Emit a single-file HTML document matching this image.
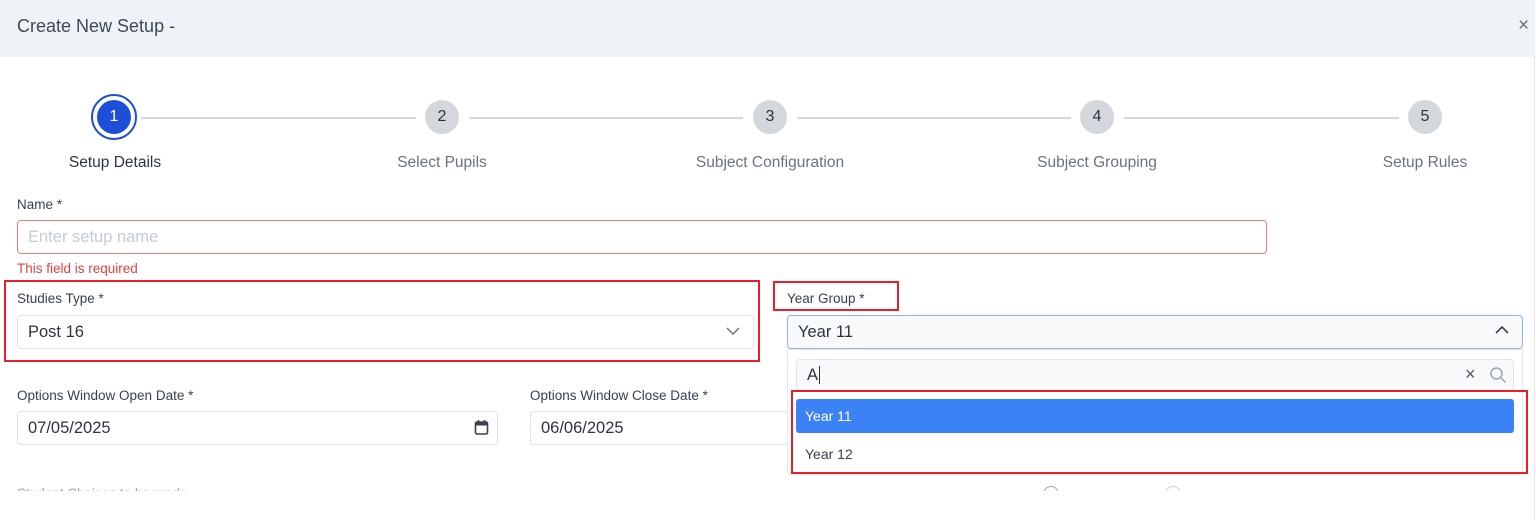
<!DOCTYPE html>
<html><head><meta charset="utf-8"><style>
*{box-sizing:border-box;margin:0;padding:0}
body{width:1536px;height:520px;background:#fff;font-family:"Liberation Sans",sans-serif;position:relative;overflow:hidden;color:#374151}
.a{position:absolute}
.hdr{left:0;top:0;width:1535px;height:57px;background:#eff3f8}
.t{font-size:18px;color:#3f4856;left:17px;top:16px}
.circ{width:34px;height:34px;border-radius:50%;background:#d4d7dc;color:#2d3440;font-size:16px;text-align:center;line-height:34px;top:100px}
.line{height:2px;background:#d4d7dc;top:117px}
.lbl{font-size:15.5px;color:#6b7280;top:154px;white-space:nowrap;transform:translateX(-50%)}
.fl{font-size:13.5px;color:#374151}
.inp{border:1px solid #dfe3ea;border-radius:4px;background:#fff;height:34px;font-size:16.5px;color:#2d3440;padding-left:10px;line-height:32px}
.red{border:2px solid #e5202b}
</style></head><body>
<div class="a hdr"></div>
<div class="a t">Create New Setup -</div>
<div class="a" style="left:1518px;top:15px;font-size:19px;color:#6b7280">×</div>
<div class="a" style="left:1534px;top:57px;width:1px;height:463px;background:#e5e7eb"></div>

<div class="a line" style="left:141px;width:275px"></div>
<div class="a line" style="left:469px;width:274px"></div>
<div class="a line" style="left:797px;width:274px"></div>
<div class="a line" style="left:1124px;width:275px"></div>
<div class="a circ" style="left:91px;top:94px;width:46px;height:46px;background:#fff;border:2px solid #1d4ed8"></div>
<div class="a circ" style="left:97px;background:#1d4ed8;color:#fff">1</div>
<div class="a circ" style="left:425px">2</div>
<div class="a circ" style="left:753px">3</div>
<div class="a circ" style="left:1080px">4</div>
<div class="a circ" style="left:1408px">5</div>
<div class="a lbl" style="left:115px;color:#2d3440">Setup Details</div>
<div class="a lbl" style="left:442px">Select Pupils</div>
<div class="a lbl" style="left:770px">Subject Configuration</div>
<div class="a lbl" style="left:1097px">Subject Grouping</div>
<div class="a lbl" style="left:1425px">Setup Rules</div>

<div class="a fl" style="left:17px;top:197px">Name *</div>
<div class="a inp" style="left:17px;top:220px;width:1250px;border-color:#f07c7c;color:#c5cbd5">Enter setup name</div>
<div class="a" style="left:17px;top:261px;font-size:13.5px;color:#e53e3e">This field is required</div>

<div class="a red" style="left:4px;top:280px;width:756px;height:82px"></div>
<div class="a fl" style="left:17px;top:291px">Studies Type *</div>
<div class="a inp" style="left:17px;top:315px;width:737px">Post 16</div>
<svg class="a" style="left:726px;top:326px" width="14" height="10"><path d="M1 2l6 6 6-6" fill="none" stroke="#6b7280" stroke-width="1.5"/></svg>

<div class="a red" style="left:773px;top:281px;width:126px;height:30px"></div>
<div class="a fl" style="left:787px;top:291px">Year Group *</div>
<div class="a inp" style="left:787px;top:315px;width:736px;border-color:#8fb4f6;background:#f8f9fb">Year 11</div>
<svg class="a" style="left:1495px;top:325px" width="14" height="10"><path d="M1 8l6-6 6 6" fill="none" stroke="#374151" stroke-width="1.6"/></svg>

<div class="a fl" style="left:17px;top:388px">Options Window Open Date *</div>
<div class="a inp" style="left:17px;top:411px;width:481px">07/05/2025</div>
<svg class="a" style="left:474px;top:419px" width="15" height="17"><rect x="1.5" y="3" width="12" height="12" rx="1.5" fill="none" stroke="#374151" stroke-width="1.6"/><rect x="1.5" y="3" width="12" height="3.5" fill="#374151"/><path d="M4.5 1v3M10.5 1v3" stroke="#374151" stroke-width="1.6"/></svg>
<div class="a fl" style="left:530px;top:388px">Options Window Close Date *</div>
<div class="a inp" style="left:530px;top:411px;width:300px">06/06/2025</div>
<div class="a" style="left:17px;top:486px;height:5px;overflow:hidden;font-size:13.5px;color:#9ca3af;width:300px"><div>Student Choices to be made</div></div>
<div class="a" style="left:1043px;top:486px;width:16px;height:16px;border:1.5px solid #7aa7f0;border-radius:50%;clip-path:inset(0 0 11px 0)"></div>
<div class="a" style="left:1165px;top:486px;width:16px;height:16px;border:1.5px solid #c9ced6;border-radius:50%;clip-path:inset(0 0 11px 0)"></div>

<div class="a" style="left:787px;top:349px;width:736px;height:126px;background:#fff;border:1px solid #e3e6eb;border-radius:0 0 4px 4px"></div>
<div class="a inp" style="left:796px;top:359px;width:718px;height:32px;background:#f8f9fb;padding-left:10px;line-height:30px">A<span style="border-left:1px solid #2d3440;margin-left:1px"></span></div>
<div class="a" style="left:1465px;top:364px;font-size:18px;color:#4b5563">×</div>
<svg class="a" style="left:1489px;top:366px" width="18" height="18"><circle cx="7.5" cy="7.5" r="5.5" fill="none" stroke="#9ca3af" stroke-width="1.5"/><path d="M11.5 11.5l5 5" stroke="#9ca3af" stroke-width="1.5"/></svg>
<div class="a" style="left:796px;top:399px;width:718px;height:34px;background:#3b82f6;border-radius:3px;color:#fff;font-size:14px;line-height:34px;padding-left:9px">Year 11</div>
<div class="a" style="left:805px;top:446px;font-size:14px;color:#374151">Year 12</div>
<div class="a red" style="left:791px;top:390px;width:737px;height:84px"></div>
</body></html>
